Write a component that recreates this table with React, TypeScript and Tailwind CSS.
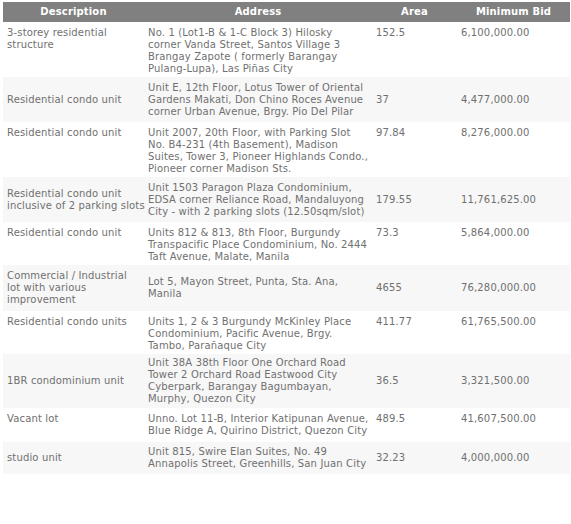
type Row = {
  desc: string[];
  address: string[];
  area: string;
  bid: string;
  h: string;
};

const rows: Row[] = [
  {
    desc: ["3-storey residential", "structure"],
    address: [
      "No. 1 (Lot1-B & 1-C Block 3) Hilosky",
      "corner Vanda Street, Santos Village 3",
      "Brangay Zapote ( formerly Barangay",
      "Pulang-Lupa), Las Piñas City",
    ],
    area: "152.5",
    bid: "6,100,000.00",
    h: "h-[55px]",
  },
  {
    desc: ["Residential condo unit"],
    address: [
      "Unit E, 12th Floor, Lotus Tower of Oriental",
      "Gardens Makati, Don Chino Roces Avenue",
      "corner Urban Avenue, Brgy. Pio Del Pilar",
    ],
    area: "37",
    bid: "4,477,000.00",
    h: "h-[45px]",
  },
  {
    desc: ["Residential condo unit"],
    address: [
      "Unit 2007, 20th Floor, with Parking Slot",
      "No. B4-231 (4th Basement), Madison",
      "Suites, Tower 3, Pioneer Highlands Condo.,",
      "Pioneer corner Madison Sts.",
    ],
    area: "97.84",
    bid: "8,276,000.00",
    h: "h-[55px]",
  },
  {
    desc: ["Residential condo unit", "inclusive of 2 parking slots"],
    address: [
      "Unit 1503 Paragon Plaza Condominium,",
      "EDSA corner Reliance Road, Mandaluyong",
      "City - with 2 parking slots (12.50sqm/slot)",
    ],
    area: "179.55",
    bid: "11,761,625.00",
    h: "h-[45px]",
  },
  {
    desc: ["Residential condo unit"],
    address: [
      "Units 812 & 813, 8th Floor, Burgundy",
      "Transpacific Place Condominium, No. 2444",
      "Taft Avenue, Malate, Manila",
    ],
    area: "73.3",
    bid: "5,864,000.00",
    h: "h-[43px]",
  },
  {
    desc: ["Commercial / Industrial", "lot with various", "improvement"],
    address: ["Lot 5, Mayon Street, Punta, Sta. Ana,", "Manila"],
    area: "4655",
    bid: "76,280,000.00",
    h: "h-[46px]",
  },
  {
    desc: ["Residential condo units"],
    address: [
      "Units 1, 2 & 3 Burgundy McKinley Place",
      "Condominium, Pacific Avenue, Brgy.",
      "Tambo, Parañaque City",
    ],
    area: "411.77",
    bid: "61,765,500.00",
    h: "h-[43px]",
  },
  {
    desc: ["1BR condominium unit"],
    address: [
      "Unit 38A 38th Floor One Orchard Road",
      "Tower 2 Orchard Road Eastwood City",
      "Cyberpark, Barangay Bagumbayan,",
      "Murphy, Quezon City",
    ],
    area: "36.5",
    bid: "3,321,500.00",
    h: "h-[54px]",
  },
  {
    desc: ["Vacant lot"],
    address: [
      "Unno. Lot 11-B, Interior Katipunan Avenue,",
      "Blue Ridge A, Quirino District, Quezon City",
    ],
    area: "489.5",
    bid: "41,607,500.00",
    h: "h-[34px]",
  },
  {
    desc: ["studio unit"],
    address: [
      "Unit 815, Swire Elan Suites, No. 49",
      "Annapolis Street, Greenhills, San Juan City",
    ],
    area: "32.23",
    bid: "4,000,000.00",
    h: "h-[32px]",
  },
];

function Lines({ lines }: { lines: string[] }) {
  return (
    <div className="whitespace-nowrap">
      {lines.map((l, i) => (
        <div key={i}>{l}</div>
      ))}
    </div>
  );
}

export default function App() {
  return (
    <div className="min-h-[524px] bg-white pt-[2px] pl-[3px] font-['DejaVu_Sans',Verdana,sans-serif] text-[10px] leading-[12px] tracking-[0.15px] text-[#707070]">
      <div className="w-[567px]">
        {/* header */}
        <div className="grid h-[20px] grid-cols-[141px_228px_85px_113px] items-center bg-[#808080] font-bold text-white">
          <div className="text-center">Description</div>
          <div className="text-center">Address</div>
          <div className="text-center">Area</div>
          <div className="text-center">Minimum Bid</div>
        </div>

        {rows.map((r, i) => {
          const even = i % 2 === 1;
          return (
            <div
              key={i}
              className={`grid grid-cols-[141px_228px_85px_113px] ${r.h} ${
                even ? "items-center bg-[#f7f7f7]" : "items-start bg-white pt-[5px]"
              }`}
            >
              <div className="pl-[4px]">
                <Lines lines={r.desc} />
              </div>
              <div className="pl-[4px]">
                <Lines lines={r.address} />
              </div>
              <div className="pl-[4px]">{r.area}</div>
              <div className="pl-[4px]">{r.bid}</div>
            </div>
          );
        })}
      </div>
    </div>
  );
}
